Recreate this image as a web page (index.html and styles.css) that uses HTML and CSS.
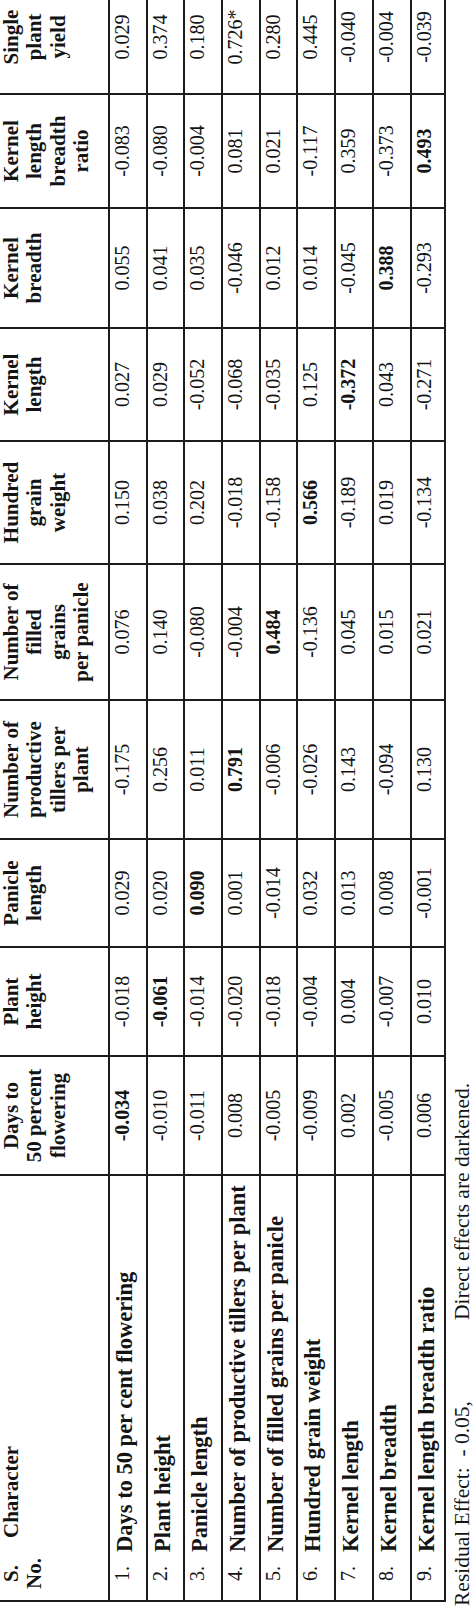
FILE: index.html
```
<!DOCTYPE html>
<html lang="en">
<head>
<meta charset="utf-8">
<title>Direct and indirect effects</title>
<link rel="stylesheet" href="styles.css">
</head>
<body>
<div class="page">
  <table class="tbl">
    <colgroup>
      <col class="c-sno"><col class="c-char"><col class="c-days"><col class="c-ph"><col class="c-pl">
      <col class="c-til"><col class="c-fil"><col class="c-hgw"><col class="c-kl"><col class="c-kb">
      <col class="c-klb"><col class="c-spy">
    </colgroup>
    <thead>
      <tr class="head">
        <th class="sno">S.<br>No.</th>
        <th class="char">Character</th>
        <th>Days to<br>50 percent<br>flowering</th>
        <th>Plant<br>height</th>
        <th>Panicle<br>length</th>
        <th>Number of<br>productive<br>tillers per<br>plant</th>
        <th>Number of<br>filled<br>grains<br>per panicle</th>
        <th>Hundred<br>grain<br>weight</th>
        <th>Kernel<br>length</th>
        <th>Kernel<br>breadth</th>
        <th>Kernel<br>length<br>breadth<br>ratio</th>
        <th>Single<br>plant<br>yield</th>
      </tr>
    </thead>
    <tbody>
      <tr><td class="sno">1.</td><td class="char">Days to 50 per cent flowering</td><td class="d">-0.034</td><td>-0.018</td><td>0.029</td><td>-0.175</td><td>0.076</td><td>0.150</td><td>0.027</td><td>0.055</td><td>-0.083</td><td>0.029</td></tr>
      <tr><td class="sno">2.</td><td class="char">Plant height</td><td>-0.010</td><td class="d">-0.061</td><td>0.020</td><td>0.256</td><td>0.140</td><td>0.038</td><td>0.029</td><td>0.041</td><td>-0.080</td><td>0.374</td></tr>
      <tr><td class="sno">3.</td><td class="char">Panicle length</td><td>-0.011</td><td>-0.014</td><td class="d">0.090</td><td>0.011</td><td>-0.080</td><td>0.202</td><td>-0.052</td><td>0.035</td><td>-0.004</td><td>0.180</td></tr>
      <tr><td class="sno">4.</td><td class="char">Number of productive tillers per plant</td><td>0.008</td><td>-0.020</td><td>0.001</td><td class="d">0.791</td><td>-0.004</td><td>-0.018</td><td>-0.068</td><td>-0.046</td><td>0.081</td><td>0.726*</td></tr>
      <tr><td class="sno">5.</td><td class="char">Number of filled grains per panicle</td><td>-0.005</td><td>-0.018</td><td>-0.014</td><td>-0.006</td><td class="d">0.484</td><td>-0.158</td><td>-0.035</td><td>0.012</td><td>0.021</td><td>0.280</td></tr>
      <tr><td class="sno">6.</td><td class="char">Hundred grain weight</td><td>-0.009</td><td>-0.004</td><td>0.032</td><td>-0.026</td><td>-0.136</td><td class="d">0.566</td><td>0.125</td><td>0.014</td><td>-0.117</td><td>0.445</td></tr>
      <tr><td class="sno">7.</td><td class="char">Kernel length</td><td>0.002</td><td>0.004</td><td>0.013</td><td>0.143</td><td>0.045</td><td>-0.189</td><td class="d">-0.372</td><td>-0.045</td><td>0.359</td><td>-0.040</td></tr>
      <tr><td class="sno">8.</td><td class="char">Kernel breadth</td><td>-0.005</td><td>-0.007</td><td>0.008</td><td>-0.094</td><td>0.015</td><td>0.019</td><td>0.043</td><td class="d">0.388</td><td>-0.373</td><td>-0.004</td></tr>
      <tr><td class="sno">9.</td><td class="char">Kernel length breadth ratio</td><td>0.006</td><td>0.010</td><td>-0.001</td><td>0.130</td><td>0.021</td><td>-0.134</td><td>-0.271</td><td>-0.293</td><td class="d">0.493</td><td>-0.039</td></tr>
    </tbody>
  </table>
  <p class="note"><span class="note-a">Residual Effect:  - 0.05,</span><span class="note-b">Direct effects are darkened.</span></p>
</div>
</body>
</html>
```

FILE: styles.css
```
* { box-sizing: border-box; }
html, body { margin: 0; padding: 0; background: #fff; overflow: hidden; }
body {
  width: 474px;
  height: 1606px;
  font-family: "Liberation Serif", "Times New Roman", serif;
  color: #141414;
}
.page {
  width: 1606px;
  height: 474px;
  overflow: hidden;
  transform-origin: 0 0;
  transform: translateY(1606px) rotate(-90deg);
}
.tbl {
  border-collapse: collapse;
  table-layout: fixed;
  width: 1621px;
  margin: -4px 0 0 4px;
}
.c-sno { width: 48px; }
.c-char { width: 378px; }
.c-days { width: 119px; }
.c-ph { width: 109px; }
.c-pl { width: 108px; }
.c-til { width: 139px; }
.c-fil { width: 136px; }
.c-hgw { width: 123px; }
.c-kl { width: 113px; }
.c-kb { width: 120px; }
.c-klb { width: 114px; }
.c-spy { width: 114px; }

.tbl th, .tbl td {
  border: 2px solid #1c1c1c;
  padding: 0;
  vertical-align: top;
}
.head th {
  height: 112px;
  font-size: 21px;
  line-height: 23.3px;
  font-weight: bold;
  text-align: center;
  padding-top: 2px;
}
.head th.sno { text-align: center; padding-left: 6px; }
.head th.char { text-align: left; padding-left: 15px; }
.tbl .sno { border-right: none; }
.tbl .char { border-left: none; }

.tbl tbody tr { height: 37.7px; }
.tbl tbody tr:last-child { height: 34.3px; }
.tbl td {
  font-size: 20px;
  text-align: center;
  padding-top: 1px;
}
.tbl td.sno { text-align: left; padding-left: 19px; }
.tbl td.char {
  text-align: left;
  font-weight: bold;
  font-size: 22.5px;
  line-height: 24px;
  padding-left: 1px;
  padding-top: 3px;
}
.tbl td.d { font-weight: bold; }

.note {
  margin: 5px 0 0 0;
  font-size: 21.5px;
  white-space: pre;
  line-height: 22px;
}
.note-a { display: inline-block; width: 286px; }
```
